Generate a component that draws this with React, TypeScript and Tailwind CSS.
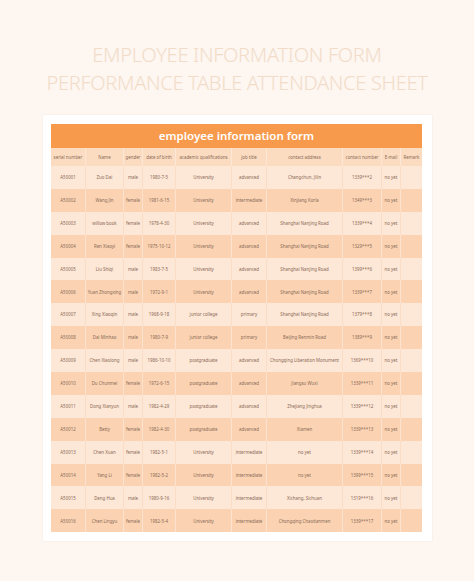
import React from "react";

const cols = [
  "serial number",
  "Name",
  "gender",
  "date of birth",
  "academic qualifications",
  "job title",
  "contact address",
  "contact number",
  "E-mail",
  "Remark",
];

const rows: string[][] = [
  ["A50001", "Zuo Dai", "male", "1980-7-5", "University", "advanced", "Changchun, Jilin", "1339***2", "no yet"],
  ["A50002", "Wang Jin", "female", "1981-6-15", "University", "intermediate", "Xinjiang Korla", "1349***3", "no yet"],
  ["A50003", "willow book", "female", "1978-4-30", "University", "advanced", "Shanghai Nanjing Road", "1339***4", "no yet"],
  ["A50004", "Ren Xiaoyi", "female", "1975-10-12", "University", "advanced", "Shanghai Nanjing Road", "1329***5", "no yet"],
  ["A50005", "Liu Shiqi", "male", "1983-7-5", "University", "advanced", "Shanghai Nanjing Road", "1399***6", "no yet"],
  ["A50006", "Yuan Zhongxing", "male", "1972-9-1", "University", "advanced", "Shanghai Nanjing Road", "1339***7", "no yet"],
  ["A50007", "Xing Xiaoqin", "male", "1968-9-18", "junior college", "primary", "Shanghai Nanjing Road", "1379***8", "no yet"],
  ["A50008", "Dai Minhao", "male", "1980-7-9", "junior college", "primary", "Beijing Renmin Road", "1389***9", "no yet"],
  ["A50009", "Chen Xiaolong", "male", "1986-10-10", "postgraduate", "advanced", "Chongqing Liberation Monument", "1369***10", "no yet"],
  ["A50010", "Du Chunmei", "female", "1972-6-15", "postgraduate", "advanced", "Jiangsu Wuxi", "1339***11", "no yet"],
  ["A50011", "Dong Xianyun", "male", "1982-4-29", "postgraduate", "advanced", "Zhejiang Jinghua", "1339***12", "no yet"],
  ["A50012", "Betty", "female", "1982-4-30", "postgraduate", "advanced", "Xiamen", "1339***13", "no yet"],
  ["A50013", "Chen Xuan", "female", "1982-5-1", "University", "intermediate", "no yet", "1339***14", "no yet"],
  ["A50014", "Yang Li", "female", "1982-5-2", "University", "intermediate", "no yet", "1399***15", "no yet"],
  ["A50015", "Deng Hua", "male", "1980-9-16", "University", "intermediate", "Xichang, Sichuan", "1319***16", "no yet"],
  ["A50016", "Chen Lingyu", "female", "1982-5-4", "University", "intermediate", "Chongqing Chaotianmen", "1339***17", "no yet"],
];

const grid = "grid grid-cols-[35px_38px_19px_33px_56px_35px_76px_39px_19px_21px]";

export default function App() {
  return (
    <div
      className="w-[474px] h-[581px] bg-[#fdf6f1] overflow-hidden"
      style={{ fontFamily: '"Noto Sans", "Open Sans", sans-serif' }}
    >
      <div className="pt-[41px] text-center text-[20px] leading-[28px] font-light text-[#f2dcc8] tracking-[-0.3px]">
        <div>EMPLOYEE INFORMATION FORM</div>
        <div>PERFORMANCE TABLE ATTENDANCE SHEET</div>
      </div>
      <div className="mt-[18px] ml-[43px] w-[389px] bg-white pl-[8px] pr-[10px] py-[9px] shadow-[0_0_2px_rgba(240,200,170,0.35)]">
        <div className="w-[371px]">
          <div className="h-[24px] bg-[#f79a4c] flex items-center justify-center text-white text-[11.5px] font-semibold leading-none">
            employee information form
          </div>
          <div className={`${grid} h-[18px] bg-[#fcdcc1] text-[#8a6a57] text-[4.4px]`}>
            {cols.map((c) => (
              <div key={c} className="flex items-center justify-center whitespace-nowrap border-r border-[#fde8d8] last:border-r-0">
                {c}
              </div>
            ))}
          </div>
          {rows.map((r, i) => (
            <div
              key={r[0]}
              className={`${grid} h-[22.9px] text-[#8a6a57] text-[4.4px] ${i % 2 === 0 ? "bg-[#fde7d6]" : "bg-[#fbd3b2]"}`}
            >
              {[...r, ""].map((c, j) => (
                <div
                  key={j}
                  className={`flex items-center justify-center whitespace-nowrap last:border-r-0 border-r ${i % 2 === 0 ? "border-[#fbdcc5]" : "border-[#fde3cf]"}`}
                >
                  {c}
                </div>
              ))}
            </div>
          ))}
        </div>
      </div>
    </div>
  );
}
